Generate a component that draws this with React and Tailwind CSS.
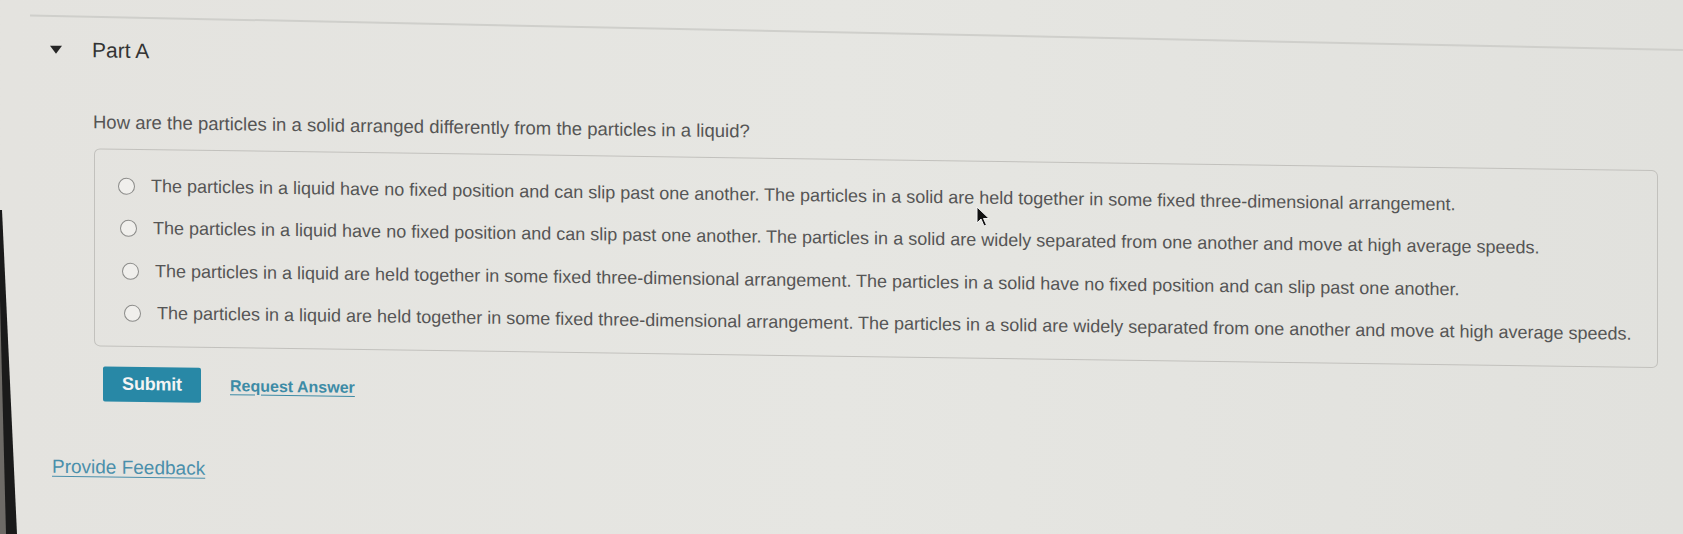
import React from "react";

const options = [
  { text: "The particles in a liquid have no fixed position and can slip past one another. The particles in a solid are held together in some fixed three-dimensional arrangement.", shift: "ml-[0px]" },
  { text: "The particles in a liquid have no fixed position and can slip past one another. The particles in a solid are widely separated from one another and move at high average speeds.", shift: "ml-[2px]" },
  { text: "The particles in a liquid are held together in some fixed three-dimensional arrangement. The particles in a solid have no fixed position and can slip past one another.", shift: "ml-[4px]" },
  { text: "The particles in a liquid are held together in some fixed three-dimensional arrangement. The particles in a solid are widely separated from one another and move at high average speeds.", shift: "ml-[6px]" },
];

const App = () => {
  return (
    <div
      className="relative w-[1683px] h-[534px] overflow-hidden bg-gradient-to-r from-[#e4e3df] via-[#e6e6e2] to-[#e1e1dd] text-[#555]"
      style={{ fontFamily: '"Liberation Sans", Arial, sans-serif' }}
    >
      {/* photo is taken at a slight angle */}
      <div className="skew-y-[0.8deg] origin-top-left">
        <div className="pt-[14px] pl-[30px]">
          <div className="border-t-2 border-[#cfcfcb] rotate-[0.4deg] origin-left" />
        </div>

        <div className="flex items-center pl-[50px] mt-[21px] h-[24px]">
          <span className="w-0 h-0 border-l-[6.5px] border-r-[6.5px] border-t-[8px] border-l-transparent border-r-transparent border-t-[#262626]" />
          <span className="ml-[30px] text-[21px] text-[#333]">Part A</span>
        </div>

        <p className="pl-[93px] mt-[49px] text-[18.5px] leading-[22px] text-[#555]">
          How are the particles in a solid arranged differently from the particles in a liquid?
        </p>

        <div className="ml-[94px] mt-[15px] w-[1564px] rounded-[6px] border border-[#c2c1bd] pt-[15px] pb-[11px] pl-[23px]">
          {options.map((o) => (
            <label key={o.text} className={`flex items-center h-[42.5px] gap-[16px] ${o.shift}`}>
              <span className="w-[17px] h-[17px] shrink-0 rounded-full border-[1.5px] border-[#8c8c8a] bg-[#f0efec]" />
              <span className="text-[18px] text-[#555]">{o.text}</span>
            </label>
          ))}
        </div>

        <div className="flex items-center ml-[103px] mt-[20px] gap-[29px]">
          <button className="w-[98px] h-[35px] rounded-[2px] bg-[#2888a6] text-[#f4f4f4] font-bold text-[18px] tracking-[-0.2px]">
            Submit
          </button>
          <a className="text-[16px] font-bold text-[#3d8ba6] underline underline-offset-[3px]">
            Request Answer
          </a>
        </div>

        <div className="pl-[52px] mt-[55px] leading-[22px]">
          <a className="text-[19px] text-[#4a8fab] underline underline-offset-[3px]">
            Provide Feedback
          </a>
        </div>
      </div>

      {/* mouse pointer over the first option */}
      <svg className="absolute left-[976px] top-[206px]" width="14" height="22" viewBox="0 0 14 22">
        <path d="M1 1 L1 17 L5 13 L8 20 L10.5 19 L7.5 12.5 L13 12.5 Z" fill="#111" stroke="#f2f2f2" strokeWidth="1" strokeLinejoin="round" />
      </svg>

      {/* screen bezel on the left */}
      <svg className="absolute left-0 top-0" width="20" height="534">
        <polygon points="0,210 2,210 17,534 0,534" fill="#1a1a1a" />
        <polygon points="0,300 0,534 6,534" fill="#6d6a66" />
      </svg>
    </div>
  );
};

export default App;
